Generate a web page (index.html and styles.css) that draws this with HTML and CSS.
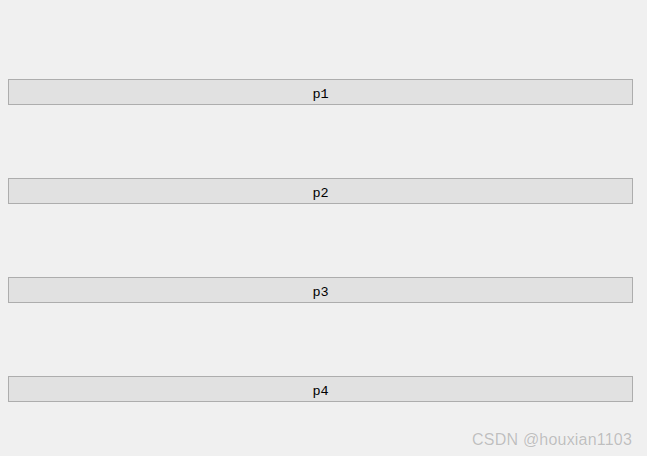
FILE: index.html
```html
<!DOCTYPE html>
<html>
<head>
<meta charset="utf-8">
<link rel="stylesheet" href="styles.css">
</head>
<body>
<div class="page">
  <div class="stack">
    <div class="btn">p1</div>
    <div class="btn">p2</div>
    <div class="btn">p3</div>
    <div class="btn">p4</div>
  </div>
  <div class="watermark">CSDN @houxian1103</div>
</div>
</body>
</html>
```
FILE: styles.css
```css
html, body {
  margin: 0;
  padding: 0;
  background: #f0f0f0;
}
.page {
  position: relative;
  width: 647px;
  height: 456px;
  overflow: hidden;
}
.stack {
  display: flex;
  flex-direction: column;
  gap: 73px;
  padding: 79px 0 0 8px;
}
.btn {
  box-sizing: border-box;
  width: 625px;
  height: 26px;
  padding-top: 4px;
  border: 1px solid #adadad;
  background: #e1e1e1;
  display: flex;
  align-items: center;
  justify-content: center;
  font-family: "Liberation Mono", "DejaVu Sans Mono", monospace;
  font-size: 13.5px;
  color: #000;
}
.watermark {
  position: absolute;
  right: 15px;
  top: 431px;
  font-family: "Liberation Sans", Arial, sans-serif;
  font-size: 16px;
  letter-spacing: 0.2px;
  color: #bfbfbf;
  text-shadow: 0 0 1px #ffffff;
}
```
